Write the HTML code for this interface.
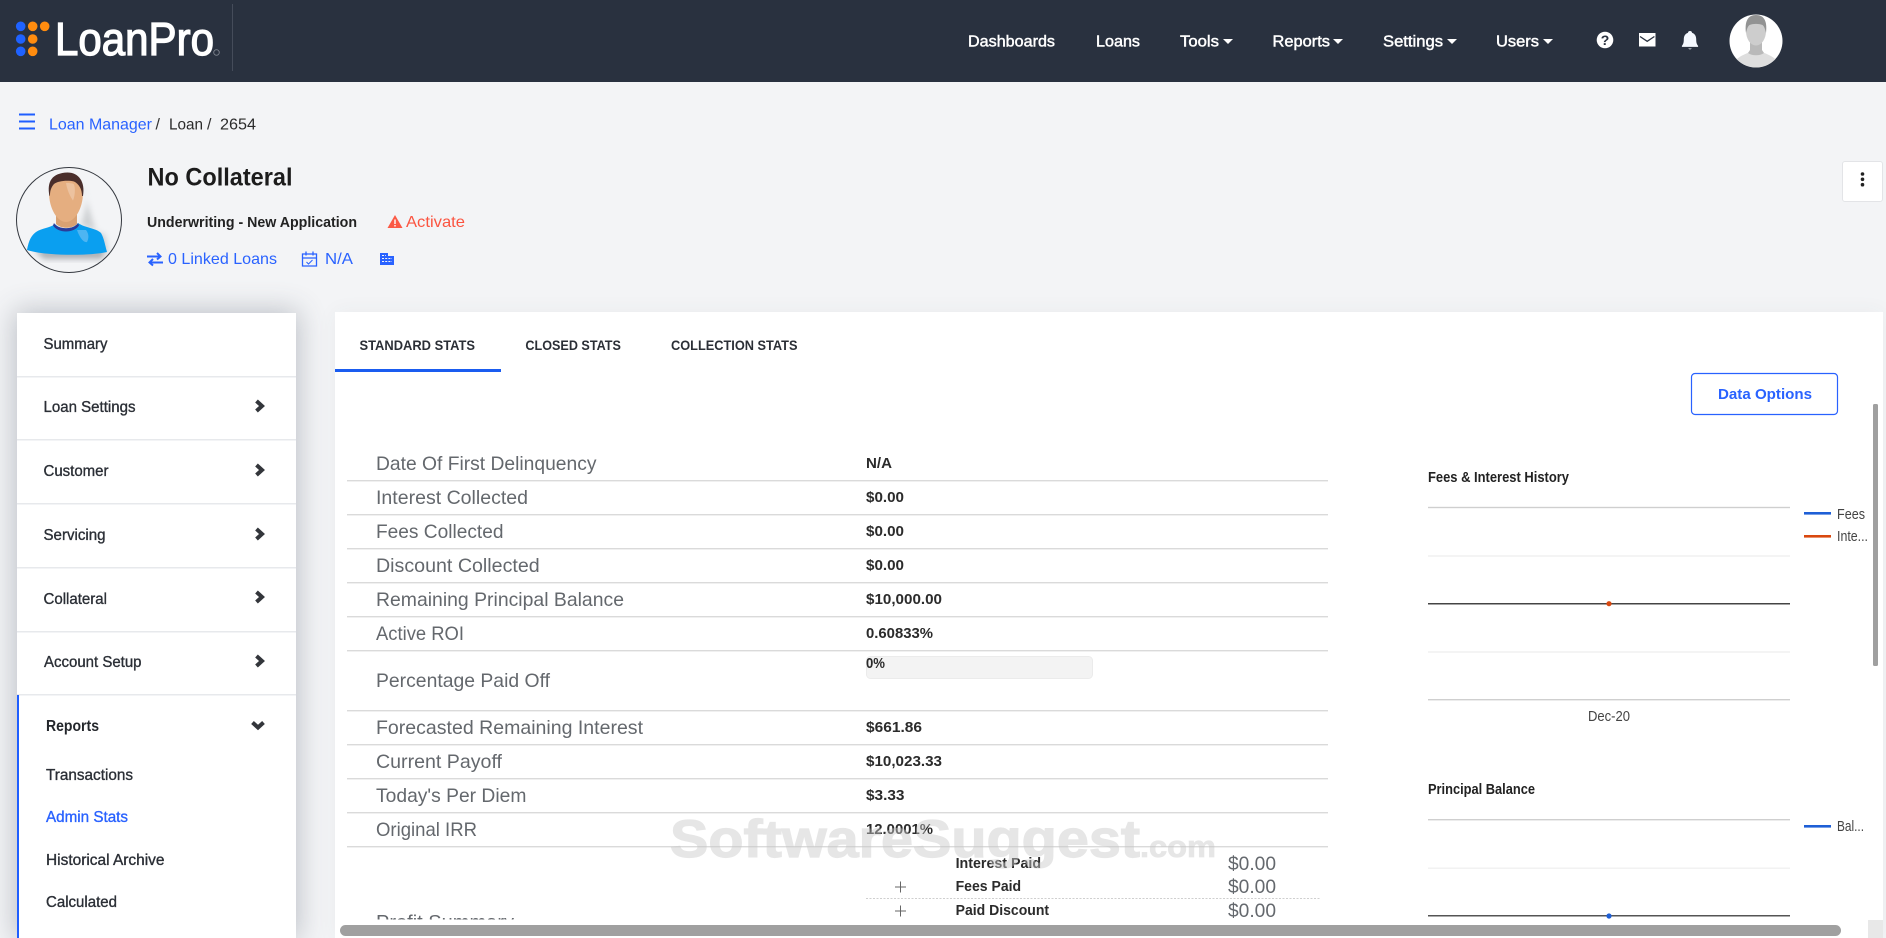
<!DOCTYPE html>
<html lang="en">
<head>
<meta charset="utf-8">
<title>LoanPro - Admin Stats</title>
<style>
html,body{margin:0;padding:0;width:1886px;height:938px;overflow:hidden;background:#f3f4f6;font-family:"Liberation Sans",sans-serif}
#page{position:relative;width:1886px;height:938px;overflow:hidden;background:#f3f4f6}
.abs{position:absolute}
#hdr{left:0;top:0;width:1886px;height:82px;background:#29313f}
#side{left:17px;top:313px;width:279px;height:625px;background:#fff;box-shadow:0 0 26px 2px rgba(60,70,85,.3);clip-path:inset(-40px -40px 0 -40px)}
#main{left:335px;top:312px;width:1548px;height:626px;background:#fff;box-shadow:0 0 20px rgba(60,70,85,.05)}
#more{left:1842px;top:161px;width:39px;height:39px;background:#fff;border:1px solid #e3e4e7;border-radius:3px}
#art{left:0;top:0}
text{font-family:"Liberation Sans",sans-serif;white-space:pre}
.n{font-size:16px;fill:#fff;stroke:#fff;stroke-width:.45px}
.s{font-size:15.5px;fill:#2b2f36;stroke:#2b2f36;stroke-width:.35px}
.l{font-size:19.5px;fill:#64686d}
.v{font-size:15px;fill:#2b2b2b;font-weight:bold}
.t{font-size:14px;fill:#2b2f36;font-weight:bold}
.c{font-size:14.5px;fill:#222;font-weight:bold}
.g{font-size:14.5px;fill:#444}
.b{fill:#2962ff}
</style>
</head>
<body>
<div id="page">
<div class="abs" id="hdr"></div>
<div class="abs" id="side"></div>
<div class="abs" id="main"></div>
<div class="abs" id="more"></div>
<svg class="abs" id="art" width="1886" height="938" viewBox="0 0 1886 938" xmlns="http://www.w3.org/2000/svg">
<defs>
<clipPath id="av"><circle cx="69" cy="220" r="52"/></clipPath>
<clipPath id="hav"><circle cx="1756" cy="41" r="26.5"/></clipPath>
<clipPath id="prof"><rect x="340" y="850" width="400" height="69.500"/></clipPath>
<filter id="bl" x="-40%" y="-40%" width="180%" height="180%"><feGaussianBlur stdDeviation="3"/></filter>
</defs>

<!-- Logo -->
<g>
<circle cx="20.7" cy="26.3" r="4.8" fill="#1f62ff"/><circle cx="32.7" cy="26.3" r="4.8" fill="#ff8c0f"/><circle cx="44.7" cy="26.3" r="4.8" fill="#ff8c0f"/>
<circle cx="20.7" cy="39" r="4.8" fill="#1f62ff"/><circle cx="32.7" cy="39" r="4.8" fill="#ff8c0f"/>
<circle cx="20.7" cy="51.3" r="4.8" fill="#1f62ff"/><circle cx="32.7" cy="51.3" r="4.8" fill="#ff8c0f"/>
<text x="55" y="55" font-size="46" fill="#fff" stroke="#fff" stroke-width="1.3" textLength="159" lengthAdjust="spacingAndGlyphs">LoanPro</text>
<circle cx="216.5" cy="52.5" r="2.8" fill="none" stroke="#7c828c" stroke-width=".9"/>
<rect x="232" y="4" width="1" height="67" fill="#454c5a"/>
</g>

<!-- Nav -->
<text class="n" x="968" y="46.500" textLength="87" lengthAdjust="spacingAndGlyphs">Dashboards</text>
<text class="n" x="1096" y="46.500" textLength="44" lengthAdjust="spacingAndGlyphs">Loans</text>
<text class="n" x="1180" y="46.500" textLength="39" lengthAdjust="spacingAndGlyphs">Tools</text>
<path d="M1223 39h10l-5 5z" fill="#fff"/>
<text class="n" x="1272.500" y="46.500" textLength="57.500" lengthAdjust="spacingAndGlyphs">Reports</text>
<path d="M1333 39h10l-5 5z" fill="#fff"/>
<text class="n" x="1383" y="46.500" textLength="60" lengthAdjust="spacingAndGlyphs">Settings</text>
<path d="M1447 39h10l-5 5z" fill="#fff"/>
<text class="n" x="1496" y="46.500" textLength="43" lengthAdjust="spacingAndGlyphs">Users</text>
<path d="M1543 39h10l-5 5z" fill="#fff"/>

<!-- Header icons -->
<circle cx="1605" cy="40" r="8.300" fill="#fff"/>
<text x="1605" y="45" font-size="14" font-weight="bold" fill="#29313f" text-anchor="middle">?</text>
<path d="M1639 33h16.500v13.500h-16.500z" fill="#fff"/>
<path d="M1640 36.500l7.200 4.800 7.200-4.800" fill="none" stroke="#29313f" stroke-width="1.300"/>
<path d="M1690 31c1.300 0 2 .8 2 1.800 3 1 4.200 3.500 4.200 6.500 0 3.500.6 5 1.900 6.600v1h-16.200v-1c1.300-1.600 1.900-3.100 1.900-6.600 0-3 1.200-5.500 4.200-6.500 0-1 .7-1.800 2-1.800z" fill="#f5f9ff"/>
<path d="M1688 48.500h4l-2 1z" fill="#f5f9ff"/>

<!-- Header avatar -->
<circle cx="1756" cy="41" r="26.500" fill="#fff"/>
<g clip-path="url(#hav)">
<path d="M1731 70c2-12 12-15 19-18h12c7 3 17 6 20 18z" fill="#dedede"/>
<path d="M1750 40h12v10l2 3c-4 3-12 3-16 0l2-3z" fill="#b9b9b9"/>
<ellipse cx="1756" cy="31" rx="10" ry="14.500" fill="#cdcdcd"/>
<path d="M1746 33c-1.500-12 2-18 10-18s11.500 6 10 18c-.8-4-2-7-3.500-8-4-1.500-9-1.500-13 0-1.500 1-2.700 4-3.500 8z" fill="#929393"/>
</g>

<!-- Breadcrumb -->
<path d="M19 114.500h16M19 121.500h16M19 128.500h16" stroke="#1f5eff" stroke-width="2" fill="none"/>
<text class="b" x="49" y="129.500" font-size="16" textLength="103" lengthAdjust="spacingAndGlyphs">Loan Manager</text>
<text x="155.500" y="129.500" font-size="16" fill="#333">/</text>
<text x="169" y="129.500" font-size="16" fill="#2b2b2b" textLength="34" lengthAdjust="spacingAndGlyphs">Loan</text>
<text x="207" y="129.500" font-size="16" fill="#333">/</text>
<text x="220" y="129.500" font-size="16" fill="#2b2b2b" textLength="36" lengthAdjust="spacingAndGlyphs">2654</text>

<!-- Customer avatar -->
<g clip-path="url(#av)">
<path d="M34 250h72l-4 9H44z" fill="#8e9296" filter="url(#bl)" opacity=".7"/>
<path d="M82 185c5 8 5 20 2 30l-3 10 24 10 3 15-6 2z" fill="#a9adb0" filter="url(#bl)" opacity=".5"/>
<path d="M27 250c2-10 4-14 9-18 6-4 14-4 19-8 5 6 18 6 23-1 7 5 18 5 23 10 3 5 4 12 6 19-17 4-62 4-80-2z" fill="#0a9ff0"/>
<path d="M54 223c4 7 20 7 24 0l1 2.500c-5 8-21 8-26 0z" fill="#2a3c9a"/>
<path d="M77 230l9 0c3 4 3 8 1 12-4 1-8-6-10-12z" fill="#4db5f2"/>
<path d="M56 208h21v16c-5 5-16 5-21 0z" fill="#d8a173"/>
<path d="M49 192c0 18 9 30 17 30s17-12 17-30c0-9-8-13-17-13s-17 4-17 13z" fill="#e5ae80"/>
<path d="M49.500 196c-3-15 3-23 18-23.500 11 0 18 9 15.500 23.500h-1c0-7-3-12-8-14.500-7-1.500-16-.5-20 2.500-2.500 3-4 6-4 11.500z" fill="#4a2e2b"/>
<path d="M66 183c3 0 7 0 8 1.500 1.500 4 1 11-1 16-3-4-6-11-7-17.500z" fill="#ecc29f"/>
</g>
<circle cx="69" cy="220" r="52.500" fill="none" stroke="#34383f" stroke-width="1"/>

<!-- Loan title -->
<text x="147.500" y="185.500" font-size="25" font-weight="bold" fill="#1c1c1c" textLength="145" lengthAdjust="spacingAndGlyphs">No Collateral</text>
<text x="147" y="227" font-size="15" font-weight="bold" fill="#222" textLength="210" lengthAdjust="spacingAndGlyphs">Underwriting - New Application</text>
<path d="M395 215l7.500 13h-15z" fill="#fb5a46"/>
<path d="M394.300 219.500h1.400v4.500h-1.400zM394.300 225h1.400v1.500h-1.400z" fill="#fff"/>
<text x="406" y="227" font-size="16" fill="#fb5440" textLength="59" lengthAdjust="spacingAndGlyphs">Activate</text>

<path d="M147 256.500h13M157 253l3.500 3.500-3.500 3M163 262.500h-13M153 259l-3.500 3.500 3.500 3" fill="none" stroke="#2962ff" stroke-width="2"/>
<text class="b" x="168" y="264" font-size="16" textLength="109" lengthAdjust="spacingAndGlyphs">0 Linked Loans</text>
<path d="M302.500 254h14v12h-14zM302.500 258h14M306 251.500v4M313 251.500v4" fill="none" stroke="#2962ff" stroke-width="1.300"/>
<path d="M306.500 262l2 2 4-4" fill="none" stroke="#2962ff" stroke-width="1"/>
<text class="b" x="325" y="264" font-size="16" textLength="28" lengthAdjust="spacingAndGlyphs">N/A</text>
<path d="M380 253h8v3h6v9h-14z" fill="#2962ff"/>
<path d="M382 255.500h4M382 258.500h10M382 261.500h10" stroke="#f3f4f6" stroke-width="1" stroke-dasharray="2 1.200"/>

<!-- More dots -->
<circle cx="1862.500" cy="174" r="1.800" fill="#222"/><circle cx="1862.500" cy="179.300" r="1.800" fill="#222"/><circle cx="1862.500" cy="184.700" r="1.800" fill="#222"/>

<!-- Sidebar -->
<g fill="#e7e9ec">
<rect x="17" y="376" width="279" height="1.500"/><rect x="17" y="439" width="279" height="1.500"/><rect x="17" y="503" width="279" height="1.500"/>
<rect x="17" y="567" width="279" height="1.500"/><rect x="17" y="631" width="279" height="1.500"/><rect x="17" y="694" width="279" height="1.500"/>
</g>
<rect x="17" y="695" width="2" height="243" fill="#1f5eff"/>
<text class="s" x="43.500" y="349" textLength="64" lengthAdjust="spacingAndGlyphs">Summary</text>
<text class="s" x="43.500" y="412" textLength="92" lengthAdjust="spacingAndGlyphs">Loan Settings</text>
<text class="s" x="43.500" y="476" textLength="65" lengthAdjust="spacingAndGlyphs">Customer</text>
<text class="s" x="43.500" y="540" textLength="62" lengthAdjust="spacingAndGlyphs">Servicing</text>
<text class="s" x="43.500" y="604" textLength="63.500" lengthAdjust="spacingAndGlyphs">Collateral</text>
<text class="s" x="44" y="667" textLength="97.500" lengthAdjust="spacingAndGlyphs">Account Setup</text>
<text x="46" y="731" font-size="15.500" font-weight="bold" fill="#23262b" textLength="53" lengthAdjust="spacingAndGlyphs">Reports</text>
<text class="s" x="46" y="780" textLength="87" lengthAdjust="spacingAndGlyphs">Transactions</text>
<text x="46" y="822" font-size="15.500" fill="#2962ff" stroke="#2962ff" stroke-width=".35" textLength="82" lengthAdjust="spacingAndGlyphs">Admin Stats</text>
<text class="s" x="46" y="865" textLength="118.500" lengthAdjust="spacingAndGlyphs">Historical Archive</text>
<text class="s" x="46" y="907" textLength="71" lengthAdjust="spacingAndGlyphs">Calculated</text>
<g fill="none" stroke="#33363b" stroke-width="4">
<path d="M256.500 401l5.500 5-5.500 5"/><path d="M256.500 465l5.500 5-5.500 5"/><path d="M256.500 529l5.500 5-5.500 5"/><path d="M256.500 592l5.500 5-5.500 5"/><path d="M256.500 656l5.500 5-5.500 5"/>
<path d="M252.500 722.500l5.500 5 5.500-5"/>
</g>

<!-- Tabs -->
<text class="t" x="359.500" y="350" textLength="115.500" lengthAdjust="spacingAndGlyphs">STANDARD STATS</text>
<text class="t" x="525.400" y="350" textLength="95.500" lengthAdjust="spacingAndGlyphs">CLOSED STATS</text>
<text class="t" x="671" y="350" textLength="126.500" lengthAdjust="spacingAndGlyphs">COLLECTION STATS</text>
<rect x="335" y="369" width="166" height="3" fill="#1a5cf0"/>

<!-- Data options -->
<rect x="1691.500" y="373.500" width="146" height="41" rx="3.500" fill="#fff" stroke="#2962ff" stroke-width="1.200"/>
<text x="1718" y="399" font-size="15" font-weight="bold" fill="#2962ff" textLength="94" lengthAdjust="spacingAndGlyphs">Data Options</text>

<!-- Table lines -->
<g fill="#dadada">
<rect x="347" y="480" width="981" height="1.400"/><rect x="347" y="514" width="981" height="1.400"/><rect x="347" y="548" width="981" height="1.400"/>
<rect x="347" y="582" width="981" height="1.400"/><rect x="347" y="616" width="981" height="1.400"/><rect x="347" y="650" width="981" height="1.400"/>
<rect x="347" y="710" width="981" height="1.400"/><rect x="347" y="744" width="981" height="1.400"/><rect x="347" y="778" width="981" height="1.400"/>
<rect x="347" y="812" width="981" height="1.400"/><rect x="347" y="846" width="981" height="1.400"/>
</g>

<!-- Labels -->
<text class="l" x="376" y="470" textLength="220.500" lengthAdjust="spacingAndGlyphs">Date Of First Delinquency</text>
<text class="l" x="376" y="504" textLength="152" lengthAdjust="spacingAndGlyphs">Interest Collected</text>
<text class="l" x="376" y="538" textLength="127.500" lengthAdjust="spacingAndGlyphs">Fees Collected</text>
<text class="l" x="376" y="572" textLength="163.700" lengthAdjust="spacingAndGlyphs">Discount Collected</text>
<text class="l" x="376" y="606" textLength="248" lengthAdjust="spacingAndGlyphs">Remaining Principal Balance</text>
<text class="l" x="376" y="640" textLength="88" lengthAdjust="spacingAndGlyphs">Active ROI</text>
<text class="l" x="376" y="687" textLength="174" lengthAdjust="spacingAndGlyphs">Percentage Paid Off</text>
<text class="l" x="376" y="734" textLength="267" lengthAdjust="spacingAndGlyphs">Forecasted Remaining Interest</text>
<text class="l" x="376" y="768" textLength="126" lengthAdjust="spacingAndGlyphs">Current Payoff</text>
<text class="l" x="376" y="802" textLength="150.400" lengthAdjust="spacingAndGlyphs">Today's Per Diem</text>
<text class="l" x="376" y="836" textLength="101" lengthAdjust="spacingAndGlyphs">Original IRR</text>
<g clip-path="url(#prof)"><text class="l" x="376" y="928.500" textLength="138" lengthAdjust="spacingAndGlyphs">Profit Summary</text></g>

<!-- Values -->
<rect x="866.500" y="656.500" width="226" height="22" rx="4" fill="#f3f3f3" stroke="#ebebeb"/>
<text class="v" x="866" y="468" textLength="26" lengthAdjust="spacingAndGlyphs">N/A</text>
<text class="v" x="866" y="502" textLength="38" lengthAdjust="spacingAndGlyphs">$0.00</text>
<text class="v" x="866" y="536" textLength="38" lengthAdjust="spacingAndGlyphs">$0.00</text>
<text class="v" x="866" y="570" textLength="38" lengthAdjust="spacingAndGlyphs">$0.00</text>
<text class="v" x="866" y="604" textLength="76" lengthAdjust="spacingAndGlyphs">$10,000.00</text>
<text class="v" x="866" y="638" textLength="67" lengthAdjust="spacingAndGlyphs">0.60833%</text>
<text class="v" x="866" y="668" textLength="19" lengthAdjust="spacingAndGlyphs">0%</text>
<text class="v" x="866" y="732" textLength="56" lengthAdjust="spacingAndGlyphs">$661.86</text>
<text class="v" x="866" y="766" textLength="76" lengthAdjust="spacingAndGlyphs">$10,023.33</text>
<text class="v" x="866" y="800" textLength="38.500" lengthAdjust="spacingAndGlyphs">$3.33</text>
<text class="v" x="866" y="834" textLength="67" lengthAdjust="spacingAndGlyphs">12.0001%</text>

<!-- Sub table -->
<text class="v" x="955.600" y="868" textLength="85.500" lengthAdjust="spacingAndGlyphs">Interest Paid</text>
<text class="v" x="955.600" y="891" textLength="65.500" lengthAdjust="spacingAndGlyphs">Fees Paid</text>
<text class="v" x="955.600" y="915" textLength="93.500" lengthAdjust="spacingAndGlyphs">Paid Discount</text>
<text class="l" x="1228" y="870" textLength="48" lengthAdjust="spacingAndGlyphs">$0.00</text>
<text class="l" x="1228" y="893" textLength="48" lengthAdjust="spacingAndGlyphs">$0.00</text>
<text class="l" x="1228" y="917" textLength="48" lengthAdjust="spacingAndGlyphs">$0.00</text>
<path d="M895 887h11M900.500 881.500v11M895 911h11M900.500 905.500v11" stroke="#666" stroke-width="1" fill="none"/>
<path d="M866 898.500h454" stroke="#cfcfcf" stroke-width="1" stroke-dasharray="2 1.500" fill="none"/>

<!-- Chart 1 -->
<text class="c" x="1428" y="482" textLength="141" lengthAdjust="spacingAndGlyphs">Fees &amp; Interest History</text>
<rect x="1428" y="506.800" width="362" height="1.400" fill="#cfcfcf"/>
<rect x="1428" y="555.300" width="362" height="1.400" fill="#f0f0f0"/>
<rect x="1428" y="603" width="362" height="1.500" fill="#444"/>
<rect x="1428" y="651.300" width="362" height="1.400" fill="#f0f0f0"/>
<rect x="1428" y="699" width="362" height="1.400" fill="#cfcfcf"/>
<circle cx="1609" cy="603.700" r="2.600" fill="#d9480f"/>
<text class="g" x="1588" y="721" textLength="42" lengthAdjust="spacingAndGlyphs">Dec-20</text>
<rect x="1804" y="512" width="27" height="2.600" fill="#1e5fd6"/>
<text class="g" x="1837" y="519" textLength="28" lengthAdjust="spacingAndGlyphs">Fees</text>
<rect x="1804" y="535" width="27" height="2.600" fill="#d9480f"/>
<text class="g" x="1837" y="541" textLength="31" lengthAdjust="spacingAndGlyphs">Inte...</text>

<!-- Chart 2 -->
<text class="c" x="1428" y="794" textLength="107" lengthAdjust="spacingAndGlyphs">Principal Balance</text>
<rect x="1428" y="819" width="362" height="1.400" fill="#cfcfcf"/>
<rect x="1428" y="867.500" width="362" height="1.400" fill="#f0f0f0"/>
<rect x="1428" y="915" width="362" height="1.500" fill="#555"/>
<circle cx="1609" cy="916" r="2.600" fill="#1e5fd6"/>
<rect x="1804" y="825" width="27" height="2.600" fill="#1e5fd6"/>
<text class="g" x="1837" y="831" textLength="27" lengthAdjust="spacingAndGlyphs">Bal...</text>

<!-- Watermark -->
<g opacity=".45" fill="#c8c8c8" stroke="#c8c8c8">
<text x="670" y="857" font-size="53" font-weight="bold" stroke-width="1.200" textLength="470" lengthAdjust="spacingAndGlyphs">SoftwareSuggest</text>
<text x="1140" y="857" font-size="31" font-weight="bold" stroke-width=".8" textLength="76" lengthAdjust="spacingAndGlyphs">.com</text>
</g>

<!-- Scrollbars -->
<rect x="1873" y="404" width="5" height="262" rx="1.500" fill="#a0a0a0"/>
<rect x="340" y="925" width="1501" height="11" rx="5.500" fill="#a0a0a0"/>
<rect x="1868" y="920" width="15" height="18" fill="#e8e8e8"/>
</svg>
</div>
</body>
</html>
